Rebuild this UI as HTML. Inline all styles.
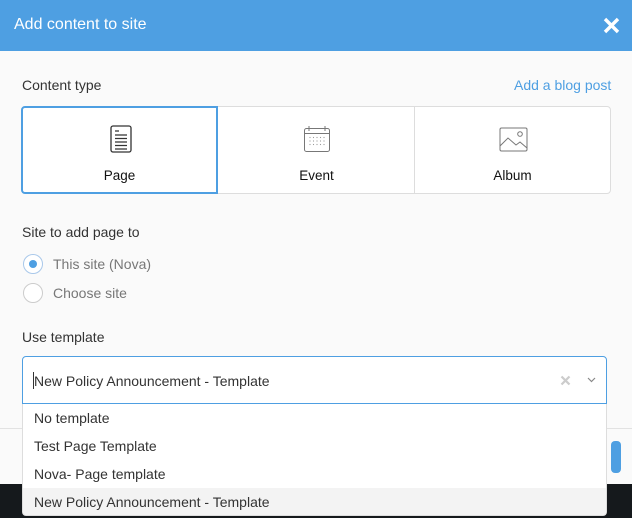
<!DOCTYPE html>
<html><head><style>
*{box-sizing:border-box;margin:0;padding:0}
body{width:632px;height:518px;overflow:hidden;background:#fafafa;font-family:"Liberation Sans",sans-serif;position:relative}
.hdr{position:absolute;left:0;top:0;width:632px;height:51px;background:#4e9fe2;color:#fff}
.hdr .t{position:absolute;left:14px;top:16px;font-size:16px}
.abs{position:absolute}
.lbl{font-size:14px;color:#333}
.card{position:absolute;top:106px;height:88px;background:#fff;border:1px solid #ddd;text-align:center}
.card .n{position:absolute;left:0;right:0;top:61px;font-size:13.5px;color:#111}
.radio{position:absolute;left:23px;width:20px;height:20px;border-radius:50%;border:1px solid #ccc;background:#fff}
.opt{position:absolute;left:34px;font-size:14px;color:#333}
</style></head><body>
<div class="hdr"><div class="t">Add content to site</div>
<svg class="abs" style="left:603px;top:17px" width="17" height="17" viewBox="0 0 17 17"><path d="M2 2L15 15M15 2L2 15" stroke="#fff" stroke-width="3.4"/></svg></div>
<div class="abs lbl" style="left:22px;top:77px">Content type</div>
<div class="abs" style="left:514px;top:77px;font-size:14px;color:#4e9fe2">Add a blog post</div>
<div class="card" style="left:217px;width:198px;border-right:none"><div class="n">Event</div>
<svg class="abs" style="left:85px;top:18px" width="28" height="28" viewBox="0 0 28 28" fill="none" stroke="#777"><rect x="1.5" y="3.5" width="25" height="23" rx="2"/><path d="M1.5 8.5H26.5M6 1V6M22 1V6"/><g fill="#999" stroke="none"><circle cx="7" cy="12.5" r=".6"/><circle cx="10.5" cy="12.5" r=".6"/><circle cx="14" cy="12.5" r=".6"/><circle cx="17.5" cy="12.5" r=".6"/><circle cx="21" cy="12.5" r=".6"/><circle cx="7" cy="16" r=".6"/><circle cx="10.5" cy="16" r=".6"/><circle cx="14" cy="16" r=".6"/><circle cx="17.5" cy="16" r=".6"/><circle cx="21" cy="16" r=".6"/><circle cx="7" cy="19.5" r=".6"/><circle cx="10.5" cy="19.5" r=".6"/><circle cx="14" cy="19.5" r=".6"/><circle cx="17.5" cy="19.5" r=".6"/><circle cx="21" cy="19.5" r=".6"/></g></svg></div>
<div class="card" style="left:414px;width:197px;border-radius:0 4px 4px 0"><div class="n">Album</div>
<svg class="abs" style="left:84px;top:20px" width="29" height="25" viewBox="0 0 29 25" fill="none" stroke="#777"><rect x="1" y="1" width="27" height="23" rx="1.5"/><path d="M1 19L9 11L17 18L21 15L28 21"/><circle cx="21" cy="7" r="2.3"/></svg></div>
<div class="card" style="left:21px;width:197px;border:2px solid #4e9fe2;border-radius:4px 0 0 4px"><div class="n" style="top:60px">Page</div>
<svg class="abs" style="left:87px;top:17px" width="23" height="28" viewBox="0 0 23 28" fill="none" stroke="#333"><rect x="1" y="1" width="20" height="26" rx="2" stroke-width="1.3"/><path d="M5 6H9M5 10H17M5 13.5H17M5 17H17M5 20.5H17M5 24H17" stroke-width="1.2"/></svg></div>
<div class="abs lbl" style="left:22px;top:224px">Site to add page to</div>
<div class="radio" style="top:254px;border-color:#a9c8ea"><div style="position:absolute;left:5px;top:5px;width:8px;height:8px;border-radius:50%;background:#4e9fe2"></div></div>
<div class="abs" style="left:53px;top:256px;font-size:14px;color:#777">This site (Nova)</div>
<div class="radio" style="top:283px"></div>
<div class="abs" style="left:53px;top:285px;font-size:14px;color:#777">Choose site</div>
<div class="abs lbl" style="left:22px;top:329px">Use template</div>
<div class="abs" style="left:0;top:428px;width:632px;height:1px;background:#e2e2e2"></div>
<div class="abs" style="left:611px;top:441px;width:10px;height:32px;background:#4e9fe2;border-radius:4px"></div>
<div class="abs" style="left:0;top:484px;width:632px;height:34px;background:#15191c"></div>
<div class="abs" style="left:22px;top:356px;width:585px;height:48px;background:#fff;border:1px solid #4e9fe2;border-radius:4px 4px 0 0">
<div class="abs" style="left:10px;top:15px;width:1px;height:17px;background:#333"></div>
<div class="abs" style="left:11px;top:16px;font-size:14px;color:#333">New Policy Announcement - Template</div>
<svg class="abs" style="left:537px;top:18px" width="11" height="11" viewBox="0 0 11 11"><path d="M1.5 1.5L9.5 9.5M9.5 1.5L1.5 9.5" stroke="#ccc" stroke-width="2.2"/></svg>
<svg class="abs" style="left:564px;top:20px" width="9" height="6" viewBox="0 0 9 6"><path d="M1 1L4.5 4.5L8 1" stroke="#888" fill="none" stroke-width="1.2"/></svg></div>
<div class="abs" style="left:22px;top:404px;width:585px;height:112px;background:#fff;border:1px solid #ddd;border-top:none;border-radius:0 0 4px 4px;overflow:hidden">
<div class="opt" style="left:11px;top:6px">No template</div>
<div class="opt" style="left:11px;top:34px">Test Page Template</div>
<div class="opt" style="left:11px;top:62px">Nova- Page template</div>
<div class="abs" style="left:0;top:84px;width:585px;height:28px;background:#f3f3f3"></div>
<div class="opt" style="left:11px;top:90px">New Policy Announcement - Template</div>
</div>
</body></html>
